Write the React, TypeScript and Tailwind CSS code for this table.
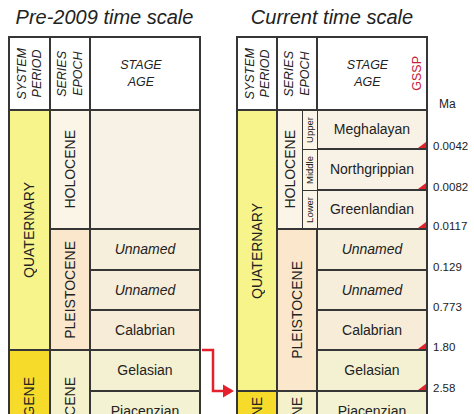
import React from "react";

const rows =
  "grid grid-rows-[71px_37px_39px_37px_39px_38px_38px_39px_39px_40px] gap-[2px]";

function V({ children, className = "" }: { children: React.ReactNode; className?: string }) {
  return (
    <span className={`[writing-mode:vertical-rl] rotate-180 whitespace-nowrap ${className}`}>
      {children}
    </span>
  );
}

function Tri() {
  return (
    <svg className="absolute right-0 bottom-0" width="8" height="6" viewBox="0 0 8 6">
      <polygon points="8,0 8,6 0,6" fill="#e3202b" />
    </svg>
  );
}

function Stage({
  name,
  pos,
  bg,
  italic = false,
  tri = false,
}: {
  name?: string;
  pos: string;
  bg: string;
  italic?: boolean;
  tri?: boolean;
}) {
  return (
    <div className={`relative col-start-3 flex items-center justify-center text-[14px] ${pos} ${bg} ${italic ? "italic" : ""}`}>
      {name}
      {tri && <Tri />}
    </div>
  );
}

function Header({ gssp = false }: { gssp?: boolean }) {
  return (
    <>
      <div className="col-start-1 row-start-1 flex items-center justify-center bg-white">
        <V className="text-center text-[12.5px] italic leading-[14.5px]">
          SYSTEM
          <br />
          PERIOD
        </V>
      </div>
      <div className="col-start-2 row-start-1 flex items-center justify-center bg-white">
        <V className="text-center text-[12.5px] italic leading-[16px]">
          SERIES
          <br />
          EPOCH
        </V>
      </div>
      <div className="col-start-3 row-start-1 flex bg-white">
        <div className={`flex flex-1 items-center justify-center text-center text-[12.5px] italic leading-[17px] ${gssp ? "pl-2" : "pr-2"}`}>
          STAGE
          <br />
          AGE
        </div>
        {gssp && (
          <div className="flex w-[17px] items-center justify-center">
            <V className="text-[12.5px] text-[#c8203a]">GSSP</V>
          </div>
        )}
      </div>
    </>
  );
}

export default function App() {
  return (
    <div className="flex h-[414px] w-[474px] overflow-hidden bg-white font-['Liberation_Sans',Arial,sans-serif] text-[#222]">
      {/* Pre-2009 */}
      <div className="ml-[8px] w-[193px]">
        <div className="h-[36px] pt-[5px] text-center text-[20px] italic leading-[24px]">Pre-2009 time scale</div>
        <div className={`${rows} grid-cols-[39px_38px_108px] bg-[#363636] p-[2px]`}>
          <Header />
          <div className="col-start-1 row-start-2 row-span-6 flex items-center justify-center bg-[#f7f48c]">
            <V className="text-[14px]">QUATERNARY</V>
          </div>
          <div className="col-start-1 row-start-8 row-span-3 flex items-center justify-center bg-[#f6db2b]">
            <V className="text-[14px]">NEOGENE</V>
          </div>
          <div className="col-start-2 row-start-2 row-span-3 flex items-center justify-center bg-[#fbf5e8]">
            <V className="text-[14px]">HOLOCENE</V>
          </div>
          <div className="col-start-2 row-start-5 row-span-3 flex items-center justify-center bg-[#fbe8cc]">
            <V className="text-[14px]">PLEISTOCENE</V>
          </div>
          <div className="col-start-2 row-start-8 row-span-3 flex items-center justify-center bg-[#f5f2cb]">
            <V className="text-[14px]">PLIOCENE</V>
          </div>
          <Stage pos="row-start-2 row-span-3" bg="bg-[#f8f2e6]" />
          <Stage name="Unnamed" italic pos="row-start-5" bg="bg-[#f6efdc]" />
          <Stage name="Unnamed" italic pos="row-start-6" bg="bg-[#f6eddb]" />
          <Stage name="Calabrian" pos="row-start-7" bg="bg-[#f7ecd8]" />
          <Stage name="Gelasian" pos="row-start-8" bg="bg-[#f4f1d3]" />
          <Stage name="Piacenzian" pos="row-start-9" bg="bg-[#f3f2d2]" />
          <Stage pos="row-start-10" bg="bg-[#f3f2cf]" />
        </div>
      </div>

      {/* arrow between the two tables */}
      <div className="w-[35px] shrink-0">
        <svg width="35" height="414" viewBox="0 0 35 414">
          <polyline points="1,350 12,350 12,391 23,391" fill="none" stroke="#e3202b" strokeWidth="2.5" />
          <polygon points="22,384.5 33,391 22,397.5" fill="#e3202b" />
        </svg>
      </div>

      {/* Current */}
      <div className="w-[192px] shrink-0">
        <div className="h-[36px] pt-[5px] text-center text-[20px] italic leading-[24px]">Current time scale</div>
        <div className={`${rows} grid-cols-[38px_38px_108px] bg-[#363636] p-[2px]`}>
          <Header gssp />
          <div className="col-start-1 row-start-2 row-span-7 flex items-center justify-center bg-[#f7f48c]">
            <V className="text-[14px]">QUATERNARY</V>
          </div>
          <div className="col-start-1 row-start-9 row-span-2 flex items-center justify-center bg-[#f6db2b]">
            <V className="text-[14px]">NEOGENE</V>
          </div>
          <div className="col-start-2 row-start-2 row-span-3 flex bg-[#363636]">
            <div className="flex flex-1 items-center justify-center bg-[#fbf5e8]">
              <V className="text-[14px]">HOLOCENE</V>
            </div>
            <div className="ml-[1px] grid w-[13px] grid-rows-[38px_40px_37px] gap-[1px]">
              <div className="flex items-center justify-center bg-[#fbf5e8]">
                <V className="text-[9.5px]">Upper</V>
              </div>
              <div className="flex items-center justify-center bg-[#fbf5e8]">
                <V className="text-[9.5px]">Middle</V>
              </div>
              <div className="flex items-center justify-center bg-[#fbf5e8]">
                <V className="text-[9.5px]">Lower</V>
              </div>
            </div>
          </div>
          <div className="col-start-2 row-start-5 row-span-4 flex items-center justify-center bg-[#fbe8cc]">
            <V className="text-[14px]">PLEISTOCENE</V>
          </div>
          <div className="col-start-2 row-start-9 row-span-2 flex items-center justify-center bg-[#f5f2cb]">
            <V className="text-[14px]">PLIOCENE</V>
          </div>
          <Stage name="Meghalayan" pos="row-start-2" bg="bg-[#f8f2e6]" tri />
          <Stage name="Northgrippian" pos="row-start-3" bg="bg-[#f8f2e6]" tri />
          <Stage name="Greenlandian" pos="row-start-4" bg="bg-[#f8f2e6]" tri />
          <Stage name="Unnamed" italic pos="row-start-5" bg="bg-[#f6efdc]" />
          <Stage name="Unnamed" italic pos="row-start-6" bg="bg-[#f6eddb]" />
          <Stage name="Calabrian" pos="row-start-7" bg="bg-[#f7ecd8]" tri />
          <Stage name="Gelasian" pos="row-start-8" bg="bg-[#f4f1d3]" tri />
          <Stage name="Piacenzian" pos="row-start-9" bg="bg-[#f3f2d2]" />
          <Stage pos="row-start-10" bg="bg-[#f3f2cf]" />
        </div>
      </div>

      {/* Ma column */}
      <div className="w-[46px] shrink-0 pt-[36px]">
        <div className={`${rows} pt-[2px]`}>
          <div className="flex items-end pl-[11px]">
            <span className="-mb-[2px] text-[12px] leading-[14px]">Ma</span>
          </div>
          {["0.0042", "0.0082", "0.0117", "0.129", "0.773", "1.80", "2.58"].map((v) => (
            <div key={v} className="flex items-end pl-[5px]">
              <span className="-mb-[4px] text-[11.5px] leading-[12px]">{v}</span>
            </div>
          ))}
        </div>
      </div>
    </div>
  );
}
